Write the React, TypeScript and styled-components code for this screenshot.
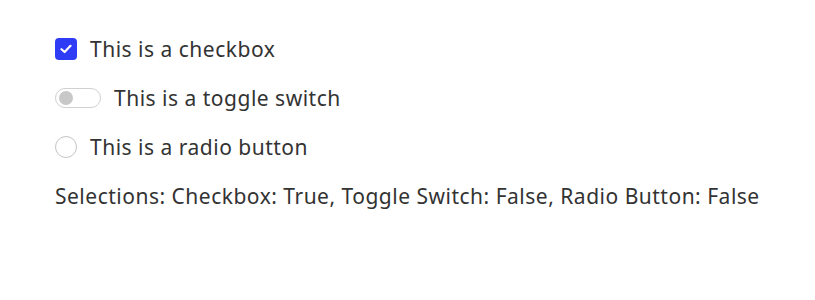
import React, { useState } from 'react';
import styled, { createGlobalStyle } from 'styled-components';

const GlobalStyle = createGlobalStyle`
  html, body {
    margin: 0;
    padding: 0;
    background: #ffffff;
  }
  body {
    font-family: 'Noto Sans', 'Open Sans', sans-serif;
    color: #333333;
  }
`;

const Page = styled.div`
  padding: 24px 55px;
  display: flex;
  flex-direction: column;
`;

const Row = styled.label`
  display: flex;
  align-items: center;
  height: 49px;
  font-size: 21px;
  letter-spacing: 0.5px;
  white-space: nowrap;
  cursor: pointer;
`;

const Box = styled.span<{ $checked: boolean }>`
  width: 22px;
  height: 22px;
  box-sizing: border-box;
  border-radius: 4px;
  margin-right: 13px;
  display: flex;
  align-items: center;
  justify-content: center;
  background: ${({ $checked }) => ($checked ? '#2f3cf5' : '#ffffff')};
  border: ${({ $checked }) => ($checked ? 'none' : '1.5px solid #c4c4c4')};
`;

const Track = styled.span<{ $on: boolean }>`
  width: 46px;
  height: 20px;
  box-sizing: border-box;
  border-radius: 10px;
  border: 1.5px solid #d0d0d0;
  background: ${({ $on }) => ($on ? '#2f3cf5' : '#ffffff')};
  margin-right: 13px;
  display: flex;
  align-items: center;
  padding: 0 3px;
  justify-content: ${({ $on }) => ($on ? 'flex-end' : 'flex-start')};
`;

const Knob = styled.span<{ $on: boolean }>`
  width: 14px;
  height: 14px;
  border-radius: 50%;
  background: ${({ $on }) => ($on ? '#ffffff' : '#c8c8c8')};
`;

const Radio = styled.span<{ $checked: boolean }>`
  width: 22px;
  height: 22px;
  box-sizing: border-box;
  border-radius: 50%;
  border: 1.5px solid #c4c4c4;
  margin-right: 13px;
  display: flex;
  align-items: center;
  justify-content: center;
  &::after {
    content: '';
    width: 10px;
    height: 10px;
    border-radius: 50%;
    background: ${({ $checked }) => ($checked ? '#2f3cf5' : 'transparent')};
  }
`;

const Summary = styled.p`
  margin: 0;
  height: 49px;
  display: flex;
  align-items: center;
  font-size: 21px;
  letter-spacing: 0.5px;
  white-space: nowrap;
`;

const Hidden = styled.input`
  display: none;
`;

const label = (v: boolean) => (v ? 'True' : 'False');

export default function App() {
  const [checked, setChecked] = useState(true);
  const [toggled, setToggled] = useState(false);
  const [radio, setRadio] = useState(false);

  return (
    <>
      <GlobalStyle />
      <Page>
        <Row>
          <Hidden type="checkbox" checked={checked} onChange={() => setChecked(!checked)} />
          <Box $checked={checked}>
            {checked && (
              <svg width="12" height="10" viewBox="0 0 12 10">
                <path d="M1.5 5.2 L4.6 8 L10.5 1.8" fill="none" stroke="#fff" strokeWidth="2.2" strokeLinecap="round" strokeLinejoin="round" />
              </svg>
            )}
          </Box>
          This is a checkbox
        </Row>
        <Row>
          <Hidden type="checkbox" checked={toggled} onChange={() => setToggled(!toggled)} />
          <Track $on={toggled}>
            <Knob $on={toggled} />
          </Track>
          This is a toggle switch
        </Row>
        <Row>
          <Hidden type="radio" checked={radio} onChange={() => setRadio(!radio)} />
          <Radio $checked={radio} />
          This is a radio button
        </Row>
        <Summary>
          Selections: Checkbox: {label(checked)}, Toggle Switch: {label(toggled)}, Radio Button: {label(radio)}
        </Summary>
      </Page>
    </>
  );
}
